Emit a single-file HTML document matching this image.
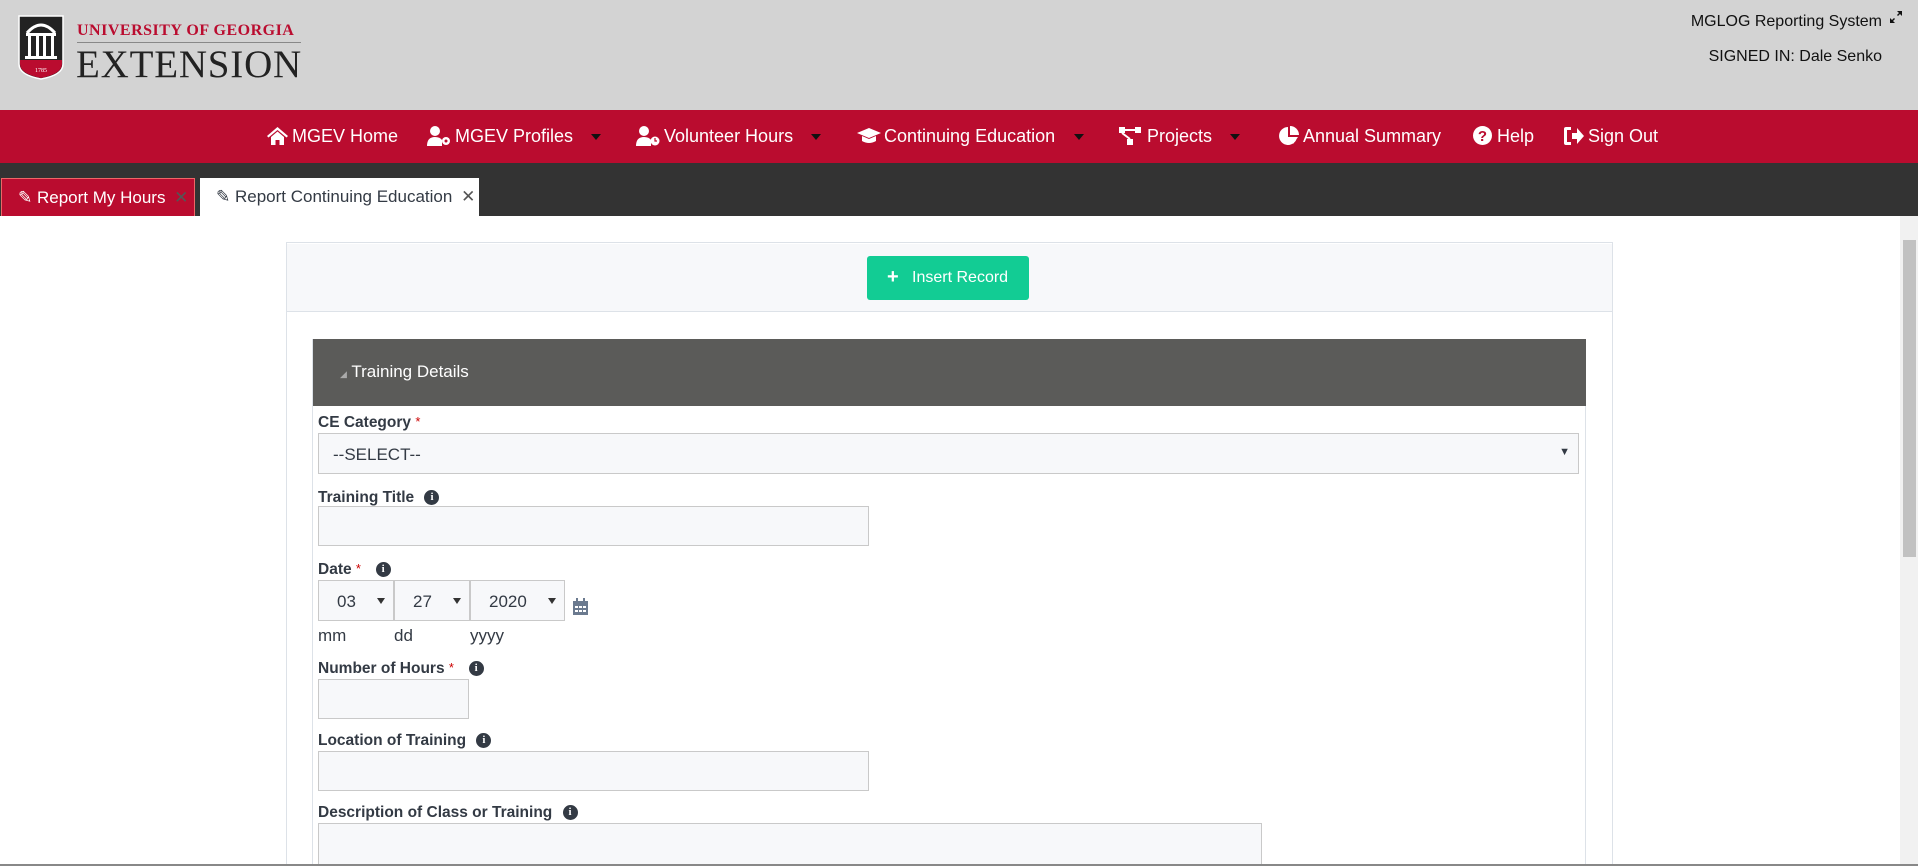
<!DOCTYPE html>
<html style="width:1918px;height:866px;overflow:hidden"><head><meta charset="utf-8"><style>
*{box-sizing:border-box;margin:0;padding:0}
body{width:1918px;height:866px;overflow:hidden;background:#fff;font-family:"Liberation Sans",Arial,sans-serif;position:relative}
.a{position:absolute}
#hdr{left:0;top:0;width:1918px;height:110px;background:#d3d3d3}
#nav{left:0;top:110px;width:1918px;height:53px;background:#ba0c2f}
#tabs{left:0;top:163px;width:1918px;height:53px;background:#333}
.ni{position:absolute;top:126px;color:#fff;font-size:18px;white-space:nowrap}
.ic{position:absolute;top:126px}
.car{position:absolute;top:134px;width:0;height:0;border-left:5px solid transparent;border-right:5px solid transparent;border-top:6px solid #111}
.lbl{position:absolute;left:318px;font-size:15.5px;font-weight:bold;color:#333a44;white-space:nowrap}
.req{color:#c00;font-weight:normal;font-size:13px;vertical-align:top}
.inp{position:absolute;background:#f7f8fa;border:1px solid #c9c9c9}
.info{display:inline-block;width:15px;height:15px;border-radius:50%;background:#333a44;color:#fff;font-size:11px;font-weight:bold;text-align:center;line-height:15px;font-family:"Liberation Serif",serif;vertical-align:middle;margin-left:6px}
.sel{position:absolute;top:580px;height:41px;background:#f7f8fa;border:1px solid #c9c9c9;font-size:17px;color:#333a44;padding:11px 0 0 18px}
.sel:after{content:"";position:absolute;right:8px;top:17px;border-left:4px solid transparent;border-right:4px solid transparent;border-top:6px solid #333}
.sub{position:absolute;top:626px;font-size:17px;color:#333a44}
.tab{position:absolute;top:178px;height:38px;font-size:17px;padding:9px 0 0 16px;white-space:nowrap}
</style></head><body>
<div id="hdr" class="a"></div>
<svg class="a" style="left:18px;top:15px" width="46" height="65" viewBox="0 0 46 65">
<path d="M1 1H45V49Q45 60 23 64Q1 60 1 49Z" fill="#222" stroke="#fff" stroke-width="1.5"/>
<path d="M2 45H44V49Q44 59 23 63Q2 59 2 49Z" fill="#ba0c2f"/>
<path d="M9 18Q23 2 37 18" fill="none" stroke="#fff" stroke-width="3"/>
<rect x="8" y="18" width="30" height="3" fill="#fff"/>
<rect x="10" y="21" width="3" height="20" fill="#fff"/><rect x="18" y="21" width="3" height="20" fill="#fff"/><rect x="25" y="21" width="3" height="20" fill="#fff"/><rect x="33" y="21" width="3" height="20" fill="#fff"/>
<rect x="7" y="41" width="32" height="3" fill="#fff"/>
<text x="23" y="57" font-size="6" fill="#fff" text-anchor="middle" font-family="Liberation Serif">1785</text>
</svg>
<div class="a" style="left:77px;top:22px;font-family:'Liberation Serif',serif;font-weight:bold;font-size:16px;color:#ba0c2f;letter-spacing:0.5px;white-space:nowrap">UNIVERSITY OF GEORGIA</div>
<div class="a" style="left:77px;top:42px;width:224px;height:1px;background:#888"></div>
<div class="a" style="left:76px;top:42px;font-family:'Liberation Serif',serif;font-size:39px;color:#222;letter-spacing:0.8px">EXTENSION</div>
<div class="a" style="right:36px;top:13px;font-size:16px;color:#111">MGLOG Reporting System</div>
<svg class="a" style="left:1890px;top:11px" width="12" height="12" viewBox="0 0 12 12"><path d="M7 0H12V5L10 3L8 5L7 4L9 2Z M0 7V12H5L3 10L5 8L4 7L2 9Z" fill="#111"/></svg>
<div class="a" style="right:36px;top:48px;font-size:16px;color:#111">SIGNED IN: Dale Senko</div>

<div id="nav" class="a"></div>
<svg class="ic" style="left:267px" width="21" height="19" viewBox="0 0 21 19"><path d="M10.5 1L0 10L1.5 11.5L10.5 4L19.5 11.5L21 10Z M4 11L10.5 5.5L17 11V19H12.5V14H8.5V19H4Z" fill="#fff"/></svg>
<svg class="ic" style="left:427px" width="24" height="20" viewBox="0 0 24 20"><circle cx="8" cy="5" r="5" fill="#fff"/><path d="M0 20Q0 11 8 11Q13 11 15 14V20Z" fill="#fff"/><circle cx="19" cy="15" r="4" fill="#fff"/><circle cx="19" cy="15" r="1.5" fill="#ba0c2f"/></svg>
<svg class="ic" style="left:636px" width="24" height="20" viewBox="0 0 24 20"><circle cx="8" cy="5" r="5" fill="#fff"/><path d="M0 20Q0 11 8 11Q13 11 15 14V20Z" fill="#fff"/><circle cx="19" cy="15" r="4.5" fill="#fff"/><path d="M19 12V15H21" stroke="#ba0c2f" stroke-width="1.2" fill="none"/></svg>
<svg class="ic" style="left:857px;top:128px" width="24" height="16" viewBox="0 0 24 16"><path d="M12 0L24 5L12 10L0 5Z" fill="#fff"/><path d="M5 8V13Q12 17 19 13V8L12 11Z" fill="#fff"/></svg>
<svg class="ic" style="left:1119px;top:127px" width="22" height="18" viewBox="0 0 22 18"><rect x="0" y="0" width="6" height="6" fill="#fff"/><rect x="16" y="0" width="6" height="6" fill="#fff"/><rect x="8" y="12" width="6" height="6" fill="#fff"/><path d="M6 3H16M3 6L11 12" stroke="#fff" stroke-width="2"/></svg>
<svg class="ic" style="left:1279px" width="20" height="20" viewBox="0 0 20 20"><path d="M9 1A9 9 0 1 0 18 11H9Z" fill="#fff"/><path d="M11 0V9H20A9 9 0 0 0 11 0Z" fill="#fff"/><path d="M11 11H19L14 18Z" fill="#fff"/></svg>
<svg class="ic" style="left:1473px" width="19" height="19" viewBox="0 0 19 19"><circle cx="9.5" cy="9.5" r="9.5" fill="#fff"/><text x="9.5" y="15" font-size="15" font-weight="bold" fill="#ba0c2f" text-anchor="middle" font-family="Liberation Sans">?</text></svg>
<svg class="ic" style="left:1564px;top:127px" width="20" height="18" viewBox="0 0 20 18"><path d="M0 2Q0 0 2 0H7V3H3V15H7V18H2Q0 18 0 16Z" fill="#fff"/><path d="M8 6H13V1L20 9L13 17V12H8Z" fill="#fff"/></svg>
<div class="ni" style="left:292px">MGEV Home</div>
<div class="ni" style="left:455px">MGEV Profiles</div><div class="car" style="left:591px"></div>
<div class="ni" style="left:664px">Volunteer Hours</div><div class="car" style="left:811px"></div>
<div class="ni" style="left:884px">Continuing Education</div><div class="car" style="left:1074px"></div>
<div class="ni" style="left:1147px">Projects</div><div class="car" style="left:1230px"></div>
<div class="ni" style="left:1303px">Annual Summary</div>
<div class="ni" style="left:1497px">Help</div>
<div class="ni" style="left:1588px">Sign Out</div>

<div id="tabs" class="a"></div>
<div class="tab" style="left:1px;width:194px;background:#ba0c2f;border:1px solid #e66;border-bottom:none;color:#fff">✎ Report My Hours <span style="color:#555;margin-left:4px">✕</span></div>
<div class="tab" style="left:200px;width:279px;background:#fff;color:#333a44">✎ Report Continuing Education <span style="color:#555;margin-left:4px">✕</span></div>

<div class="a" style="left:1900px;top:216px;width:18px;height:648px;background:#f1f1f1"></div>
<div class="a" style="left:1903px;top:240px;width:13px;height:317px;background:#c1c1c1"></div>

<div class="a" style="left:286px;top:242px;width:1327px;height:624px;border:1px solid #dde2e8;border-bottom:none;background:#fff"></div>
<div class="a" style="left:287px;top:244px;width:1325px;height:68px;background:#f7f8fa;border-bottom:1px solid #dde2e8"></div>
<div class="a" style="left:867px;top:256px;width:162px;height:44px;background:#12cc94;border-radius:3px;color:#fff;font-size:16px;padding:13px 0 0 20px;white-space:nowrap"><b style="font-size:20px;line-height:14px;vertical-align:-1px">+</b>&nbsp;&nbsp;&nbsp;Insert Record</div>
<div class="a" style="left:312px;top:339px;width:1274px;height:525px;border-left:1px solid #dde2e8;border-right:1px solid #dde2e8"></div>
<div class="a" style="left:313px;top:339px;width:1273px;height:67px;background:#5b5b59;color:#fff;font-size:17px;padding:23px 0 0 27px"><span style="font-size:9px;color:#aaa">◢</span> Training Details</div>

<div class="lbl" style="top:414px">CE Category <span class="req">*</span></div>
<div class="inp" style="left:318px;top:433px;width:1261px;height:41px;font-size:17px;color:#333a44;padding:11px 0 0 14px">--SELECT--<span style="position:absolute;right:8px;top:12px;font-size:11px">▼</span></div>

<div class="lbl" style="top:489px">Training Title <span class="info">i</span></div>
<div class="inp" style="left:318px;top:506px;width:551px;height:40px"></div>

<div class="lbl" style="top:561px">Date <span class="req">*</span> &nbsp;<span class="info">i</span></div>
<div class="sel" style="left:318px;width:76px">03</div>
<div class="sel" style="left:394px;width:76px">27</div>
<div class="sel" style="left:470px;width:95px">2020</div>
<svg class="a" style="left:573px;top:598px" width="15" height="17" viewBox="0 0 15 17"><rect x="0" y="3" width="15" height="14" fill="#6b7a8f"/><rect x="3" y="0" width="2" height="4" fill="#6b7a8f"/><rect x="10" y="0" width="2" height="4" fill="#6b7a8f"/><g fill="#fff"><rect x="2" y="8" width="3" height="2"/><rect x="6" y="8" width="3" height="2"/><rect x="10" y="8" width="3" height="2"/><rect x="2" y="12" width="3" height="2"/><rect x="6" y="12" width="3" height="2"/><rect x="10" y="12" width="3" height="2"/></g></svg>
<div class="sub" style="left:318px">mm</div>
<div class="sub" style="left:394px">dd</div>
<div class="sub" style="left:470px">yyyy</div>

<div class="lbl" style="top:660px">Number of Hours <span class="req">*</span> &nbsp;<span class="info">i</span></div>
<div class="inp" style="left:318px;top:679px;width:151px;height:40px"></div>

<div class="lbl" style="top:732px">Location of Training <span class="info">i</span></div>
<div class="inp" style="left:318px;top:751px;width:551px;height:40px"></div>

<div class="lbl" style="top:804px">Description of Class or Training <span class="info">i</span></div>
<div class="inp" style="left:318px;top:823px;width:944px;height:41px;border-bottom:none"></div>
<div class="a" style="left:0;top:864px;width:1918px;height:2px;background:#888"></div>
</body></html>
